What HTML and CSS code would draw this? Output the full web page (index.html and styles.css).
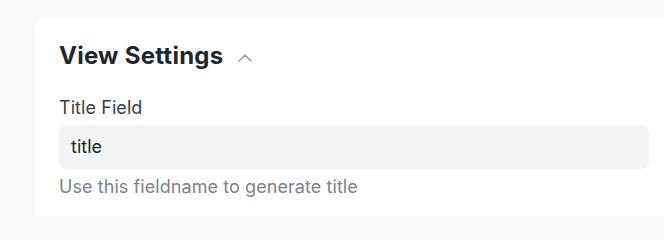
FILE: index.html
```html
<!DOCTYPE html>
<html>
<head>
<meta charset="utf-8">
<link rel="stylesheet" href="styles.css">
</head>
<body>
<div class="page">
  <section class="card">
    <div class="card-head">
      <h2 class="card-title">View Settings</h2>
      <svg class="chevron" width="14" height="8" viewBox="0 0 14 8" aria-hidden="true">
        <path d="M1 7 L7 1.2 L13 7" fill="none" stroke="#8a9097" stroke-width="1.2" stroke-linecap="round" stroke-linejoin="round"/>
      </svg>
    </div>
    <div class="field">
      <label class="field-label">Title Field</label>
      <div class="field-input">title</div>
      <p class="field-help">Use this fieldname to generate title</p>
    </div>
  </section>
</div>
</body>
</html>
```
FILE: styles.css
```css
html, body {
  margin: 0;
  padding: 0;
}
body {
  background: #f8f9f9;
  font-family: Inter, "Noto Sans", sans-serif;
  width: 664px;
  height: 216px;
  overflow: hidden;
}
.page {
  padding: 18px 0 0 34px;
}
.card {
  width: 640px;
  box-sizing: border-box;
  background: #ffffff;
  border-radius: 8px;
  box-shadow: 0 0 1px rgba(0,0,0,0.10), 0 1px 3px rgba(0,0,0,0.05);
  padding: 24px 25px 30px 25px;
}
.card-head {
  display: flex;
  align-items: center;
  gap: 15px;
}
.card-title {
  margin: 0;
  font-size: 24px;
  line-height: 28px;
  letter-spacing: 0.01em;
  font-weight: 700;
  color: #1f272e;
}
.chevron {
  display: block;
  margin-top: 3px;
}
.field {
  margin-top: 27px;
}
.field-label {
  display: block;
  font-size: 18px;
  line-height: 22px;
  letter-spacing: 0.004em;
  color: #383f46;
}
.field-input {
  margin-top: 6px;
  height: 44px;
  line-height: 44px;
  padding: 0 12px;
  background: #f3f4f5;
  border-radius: 7px;
  font-size: 18px;
  color: #1f272e;
}
.field-help {
  margin: 7px 0 0 0;
  font-size: 18px;
  line-height: 22px;
  letter-spacing: 0.004em;
  color: #7b838b;
}
```
